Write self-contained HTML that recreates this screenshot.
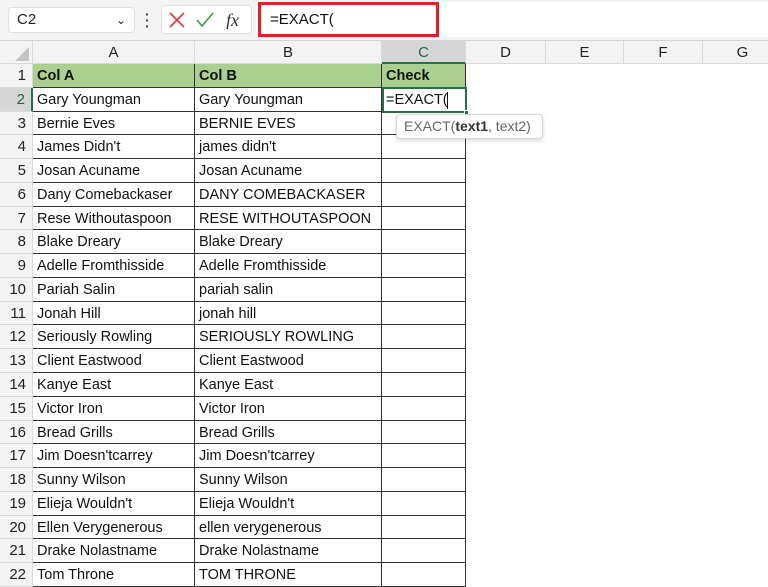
<!DOCTYPE html>
<html><head><meta charset="utf-8"><style>
*{margin:0;padding:0;box-sizing:border-box}
body{width:768px;height:587px;overflow:hidden;background:#fff;font-family:"Liberation Sans",sans-serif;position:relative}
.a{position:absolute}
.top{left:0;top:0;width:768px;height:41px;background:#f3f3f3;border-bottom:1px solid #d4d4d4}
.cell{position:absolute;font-size:14.5px;color:#111;padding-left:4px;line-height:25px;white-space:nowrap;overflow:hidden;border-right:1px solid #333;border-bottom:1px solid #333}
.rh{position:absolute;left:0;width:33px;background:#f3f3f3;border-bottom:1px solid #dadada;border-right:1px solid #dadada;font-size:15px;color:#222;text-align:right;padding-right:6px;line-height:24px}
.ch{position:absolute;top:41px;height:23px;background:#f3f3f3;border-right:1px solid #dadada;border-bottom:1px solid #dadada;font-size:15px;color:#222;text-align:center;line-height:23px}
</style></head><body>
<div class="a top"></div>
<div class="a" style="left:8px;top:7px;width:127px;height:26px;background:#fff;border:1px solid #e0e0e0;border-radius:4px;font-size:15px;line-height:24px;padding-left:8px;color:#222">C2<span style="position:absolute;right:8px;top:0;font-size:12px;">&#8964;</span></div>
<div class="a" style="left:145px;top:11px;width:3px;height:18px;color:#444;font-size:14px;line-height:6px;font-weight:bold">·<br>·<br>·</div>
<div class="a" style="left:161px;top:5px;width:91px;height:29px;background:#fff;border:1px solid #e0e0e0;border-radius:4px"></div>
<svg class="a" style="left:168px;top:11px" width="80" height="18"><path d="M2 2 L16 16 M16 2 L2 16" stroke="#e8333b" stroke-width="1.6"/><path d="M29 9 L34 15 L45 2" stroke="#3d9a4a" stroke-width="1.6" fill="none"/><text x="58" y="15" font-family="Liberation Serif" font-style="italic" font-size="18" fill="#333">fx</text></svg>
<div class="a" style="left:256px;top:2px;width:512px;height:35px;background:#fff"></div>
<div class="a" style="left:258px;top:2px;width:181px;height:35px;border:3px solid #e41e26;font-size:15px;line-height:29px;padding-left:9px;color:#111">=EXACT(</div>

<div class="a" style="left:0;top:41px;width:33px;height:23px;background:#f3f3f3;border-right:1px solid #dadada;border-bottom:1px solid #dadada"></div>
<svg class="a" style="left:14px;top:46px" width="16" height="16"><path d="M15 1 L15 15 L1 15 Z" fill="#c4c4c4"/></svg>
<div class="ch" style="left:33px;width:162px">A</div>
<div class="ch" style="left:195px;width:187px">B</div>
<div class="ch" style="left:382px;width:84px;background:#d6d6d6;color:#1e6b3a;border-bottom:2px solid #217346">C</div>
<div class="ch" style="left:466px;width:80px">D</div>
<div class="ch" style="left:546px;width:78px">E</div>
<div class="ch" style="left:624px;width:79px">F</div>
<div class="ch" style="left:703px;width:80px">G</div>

<div id="g"></div>
<script>
var d=[["Col A","Col B","Check"],["Gary Youngman","Gary Youngman","=EXACT("],["Bernie Eves","BERNIE EVES"],["James Didn't","james didn't"],["Josan Acuname","Josan Acuname"],["Dany Comebackaser","DANY COMEBACKASER"],["Rese Withoutaspoon","RESE WITHOUTASPOON"],["Blake Dreary","Blake Dreary"],["Adelle Fromthisside","Adelle Fromthisside"],["Pariah Salin","pariah salin"],["Jonah Hill","jonah hill"],["Seriously Rowling","SERIOUSLY ROWLING"],["Client Eastwood","Client Eastwood"],["Kanye East","Kanye East"],["Victor Iron","Victor Iron"],["Bread Grills","Bread Grills"],["Jim Doesn'tcarrey","Jim Doesn'tcarrey"],["Sunny Wilson","Sunny Wilson"],["Elieja Wouldn't","Elieja Wouldn't"],["Ellen Verygenerous","ellen verygenerous"],["Drake Nolastname","Drake Nolastname"],["Tom Throne","TOM THRONE"]];
var h="";var xs=[33,195,382,466];
for(var i=0;i<22;i++){var t=64+Math.round(i*23.77),n=64+Math.round((i+1)*23.77),hh=n-t;
var rs=i==1?"background:#d6d6d6;color:#1e6b3a;border-right:2px solid #217346;":"";
h+='<div class="rh" style="top:'+t+'px;height:'+hh+'px;'+rs+'">'+(i+1)+'</div>';
for(var c=0;c<3;c++){var s="left:"+xs[c]+"px;top:"+t+"px;width:"+(xs[c+1]-xs[c])+"px;height:"+hh+"px;";
if(i==0)s+="background:#a9d08e;font-weight:bold;";
var v=(d[i][c]||"").replace(/'/g,"&#39;");
h+='<div class="cell" style="'+s+'">'+v+'</div>';}}
document.getElementById("g").innerHTML=h;
</script>
<div class="a" style="left:382px;top:87px;width:85px;height:26px;border:2px solid #217346"></div>
<div class="a" style="left:447px;top:92px;width:1px;height:17px;background:#111"></div>
<div class="a" style="left:464px;top:110px;width:5px;height:5px;background:#217346;border:1px solid #fff"></div>
<div class="a" style="left:396px;top:114px;width:147px;height:25px;background:#fff;border:1px solid #d6d6d6;border-radius:4px;box-shadow:0 2px 4px rgba(0,0,0,.15);font-size:14px;line-height:23px;padding-left:7px;color:#666;white-space:nowrap">EXACT(<b style="color:#333">text1</b>, text2)</div>
</body></html>
